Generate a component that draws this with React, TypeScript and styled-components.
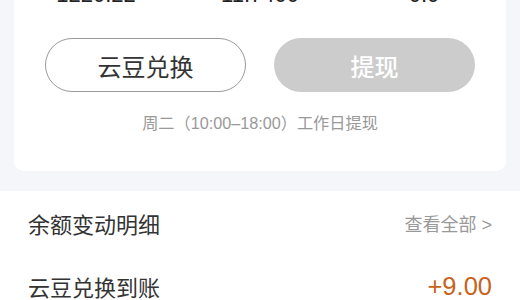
import React from 'react';
import styled, {createGlobalStyle} from 'styled-components';

const GlobalStyle = createGlobalStyle`
  html, body {
    margin: 0;
    padding: 0;
    background: #f5f6fa;
    font-family: 'Liberation Sans', 'Noto Sans CJK SC', sans-serif;
  }
`;

const stats = ['1220.22', '11.7400', '0.0'];

const records = [{label: '云豆兑换到账', amount: '+9.00'}];

export default function App() {
  return (
    <Page>
      <GlobalStyle />
      <CardWrap>
        <Card>
          <StatsRow>
            {stats.map(s => (
              <Stat key={s}>{s}</Stat>
            ))}
          </StatsRow>
          <Actions>
            <PillButton>云豆兑换</PillButton>
            <PillButton disabled primary>
              提现
            </PillButton>
          </Actions>
          <Hint>周二（10:00–18:00）工作日提现</Hint>
        </Card>
      </CardWrap>
      <Section>
        <SectionHeader>
          <SectionTitle>余额变动明细</SectionTitle>
          <More>查看全部 &gt;</More>
        </SectionHeader>
        {records.map(r => (
          <Row key={r.label}>
            <RowLabel>{r.label}</RowLabel>
            <Amount>{r.amount}</Amount>
          </Row>
        ))}
      </Section>
    </Page>
  );
}

const Page = styled.div`
  width: 520px;
  height: 300px;
  overflow: hidden;
  background: #f5f6fa;
`;

const CardWrap = styled.div`
  padding: 0 14px 20px;
`;

const Card = styled.div`
  background: #fff;
  border-radius: 0 0 10px 10px;
  padding: 0 0 37px;
  display: flex;
  flex-direction: column;
`;

const StatsRow = styled.div`
  display: grid;
  grid-template-columns: repeat(3, 1fr);
  height: 30px;
  line-height: 30px;
  margin-top: -20px;
`;

const Stat = styled.div`
  text-align: center;
  font-size: 22px;
  color: #222;
`;

const Actions = styled.div`
  display: flex;
  justify-content: space-between;
  padding: 28px 31px 0;
`;

const PillButton = styled.button<{primary?: boolean}>`
  width: 201px;
  height: 54px;
  border-radius: 27px;
  font-family: 'Liberation Sans', 'Noto Sans CJK SC', sans-serif;
  font-size: 24px;
  cursor: pointer;
  border: ${p => (p.primary ? 'none' : '1px solid #9a9a9a')};
  background: ${p => (p.primary ? '#cccccc' : '#fff')};
  color: ${p => (p.primary ? '#fff' : '#333')};
  font-weight: ${p => (p.primary ? 500 : 400)};
`;

const Hint = styled.div`
  margin-top: 20px;
  text-align: center;
  font-size: 16.2px;
  line-height: 22px;
  color: #999;
`;

const Section = styled.div`
  background: #fff;
  padding: 0 28px;
`;

const SectionHeader = styled.div`
  display: flex;
  align-items: center;
  justify-content: space-between;
  height: 64px;
`;

const SectionTitle = styled.div`
  font-size: 22px;
  color: #333;
`;

const More = styled.div`
  font-size: 18px;
  color: #999;
`;

const Row = styled.div`
  display: flex;
  align-items: center;
  justify-content: space-between;
  height: 62px;
`;

const RowLabel = styled.div`
  font-size: 22px;
  color: #333;
`;

const Amount = styled.div`
  font-size: 25.5px;
  color: #c8621e;
`;
